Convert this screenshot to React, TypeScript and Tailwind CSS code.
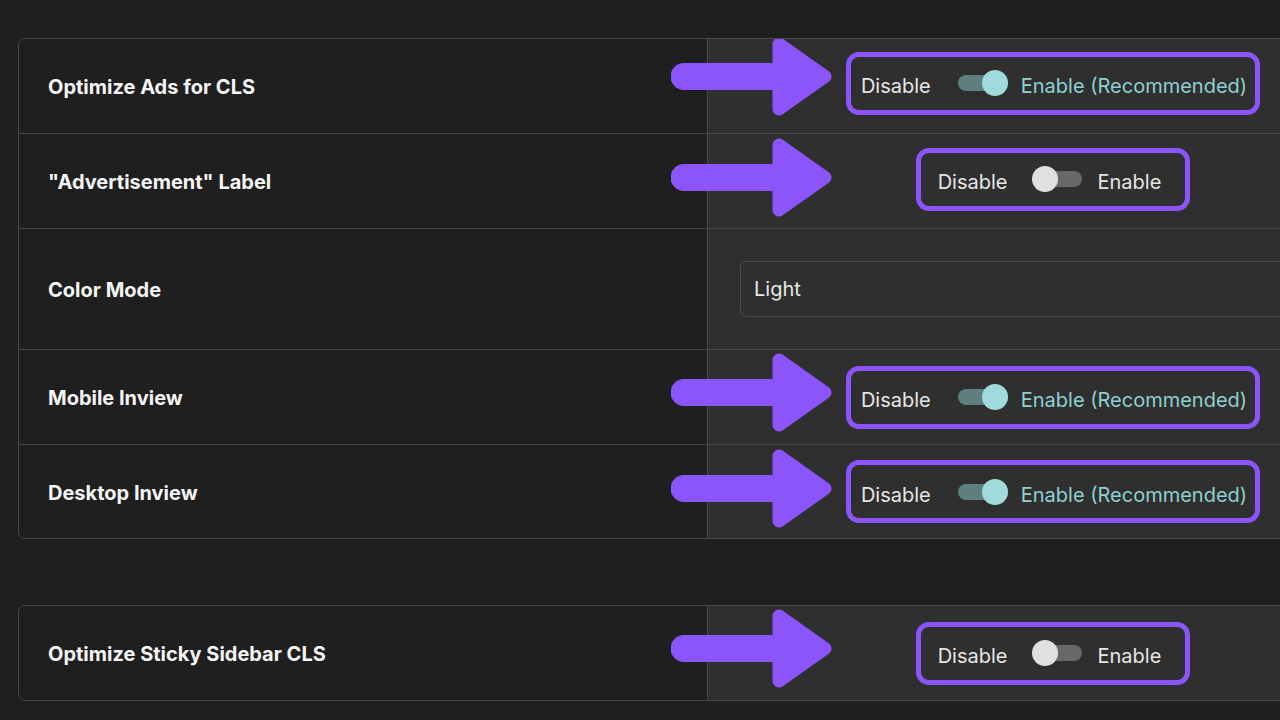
import React from "react";

const FONT = { fontFamily: "Inter, 'Noto Sans', sans-serif" };

const Arrow: React.FC<{ top: number }> = ({ top }) => (
  <svg
    className="absolute left-[652px] pointer-events-none"
    style={{ top }}
    width="162"
    height="80"
    viewBox="0 0 162 80"
  >
    <line x1="13" y1="39.5" x2="112" y2="39.5" stroke="#8c54fb" strokeWidth="27" strokeLinecap="round" />
    <polygon
      points="108,7 154,39.5 108,72"
      fill="#8c54fb"
      stroke="#8c54fb"
      strokeWidth="13"
      strokeLinejoin="round"
    />
  </svg>
);

const Switch: React.FC<{ on: boolean }> = ({ on }) => (
  <div className="relative w-[50px] h-[26px] flex items-center">
    <div
      className={`w-full h-[16px] rounded-full ${on ? "bg-[#5f7e7f]" : "bg-[#686868]"}`}
    />
    <div
      className={`absolute top-0 w-[26px] h-[26px] rounded-full ${
        on ? "right-0 bg-[#9fdadc]" : "left-0 bg-[#e0e0e0]"
      }`}
    />
  </div>
);

interface ToggleProps {
  on: boolean;
  recommended?: boolean;
  pad: string;
}

const Toggle: React.FC<ToggleProps> = ({ on, recommended, pad }) => (
  <div
    className={`flex items-center h-[63px] border-[5px] border-[#8c54fb] rounded-[13px] text-[20px] ${pad}`}
  >
    <span className="relative top-[3px] text-[#e6e6e6]">Disable</span>
    <div className={on ? "ml-[27px] mr-[13px]" : "ml-[24px] mr-[16px]"}>
      <Switch on={on} />
    </div>
    <span className={`relative top-[3px] ${on ? "text-[#8fd0d1]" : "text-[#e6e6e6]"}`}>
      {recommended ? "Enable (Recommended)" : "Enable"}
    </span>
  </div>
);

interface RowProps {
  label: string;
  height: string;
  first?: boolean;
  arrowTop?: number;
  children: React.ReactNode;
}

const Row: React.FC<RowProps> = ({ label, height, first, arrowTop, children }) => (
  <div
    className={`relative grid grid-cols-[688px_1fr] ${height} ${
      first ? "" : "border-t border-[#494949]"
    }`}
  >
    <div className="flex items-center pl-[29px] pt-[2px] text-[20px] font-bold text-[#f5f5f5] bg-[#1f1f1f]">
      {label}
    </div>
    <div className="flex items-center justify-center border-l border-[#494949] bg-[#2f2f2f]">
      {children}
    </div>
    {arrowTop !== undefined && <Arrow top={arrowTop} />}
  </div>
);

export default function App() {
  return (
    <div
      className="w-[1280px] h-[720px] overflow-hidden bg-[#1f1f1f] pt-[38px] pl-[18px]"
      style={FONT}
    >
      <div className="w-[1381px] border border-[#494949] rounded-[7px] overflow-hidden">
        <Row label="Optimize Ads for CLS" height="h-[94px]" first arrowTop={-2}>
          <div className="-mt-[6px]">
            <Toggle on recommended pad="pl-[10px] pr-[8px]" />
          </div>
        </Row>
        <Row label={'"Advertisement" Label'} height="h-[95px]" arrowTop={4}>
          <div className="-mt-[4px]">
            <Toggle on={false} pad="pl-[17px] pr-[24px]" />
          </div>
        </Row>
        <Row label="Color Mode" height="h-[121px]">
          <div className="w-full pl-[32px] pr-[32px]">
            <div className="h-[56px] flex items-center pl-[13px] border border-[#4a4a4a] rounded-[6px] text-[20px] text-[#e8e8e8] bg-[#2f2f2f]">
              Light
            </div>
          </div>
        </Row>
        <Row label="Mobile Inview" height="h-[95px]" arrowTop={3}>
          <Toggle on recommended pad="pl-[10px] pr-[8px]" />
        </Row>
        <Row label="Desktop Inview" height="h-[94px]" arrowTop={4}>
          <Toggle on recommended pad="pl-[10px] pr-[8px]" />
        </Row>
      </div>

      <div className="mt-[66px] w-[1381px] border border-[#494949] rounded-[7px] overflow-hidden">
        <Row label="Optimize Sticky Sidebar CLS" height="h-[94px]" first arrowTop={3}>
          <Toggle on={false} pad="pl-[17px] pr-[24px]" />
        </Row>
      </div>
    </div>
  );
}
